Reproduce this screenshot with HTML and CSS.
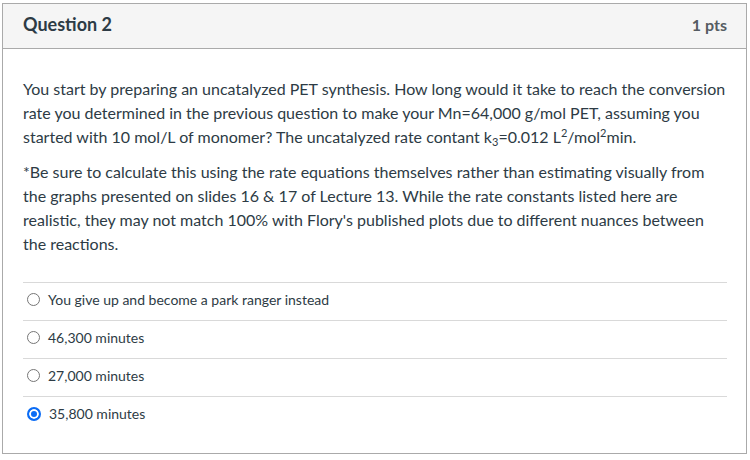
FILE: index.html
```html
<!DOCTYPE html>
<html>
<head>
<meta charset="utf-8">
<link rel="stylesheet" href="styles.css">
</head>
<body>
<div class="question">
  <div class="header">
    <h2 class="title">Question 2</h2>
    <span class="pts">1 pts</span>
  </div>
  <div class="content">
    <p>You start by preparing an uncatalyzed PET synthesis. How long would it take to reach the conversion rate you determined in the previous question to make your Mn=64,000 g/mol PET, assuming you started with 10 mol/L of monomer? The uncatalyzed rate contant k<sub>3</sub>=0.012 L<sup>2</sup>/mol<sup>2</sup>min.</p>
    <p>*Be sure to calculate this using the rate equations themselves rather than estimating visually from the graphs presented on slides 16 &amp; 17 of Lecture 13. While the rate constants listed here are realistic, they may not match 100% with Flory's published plots due to different nuances between the reactions.</p>
    <div class="answers">
      <label class="answer"><span class="radio"></span>You give up and become a park ranger instead</label>
      <label class="answer"><span class="radio"></span>46,300 minutes</label>
      <label class="answer"><span class="radio"></span>27,000 minutes</label>
      <label class="answer"><span class="radio checked"></span>35,800 minutes</label>
    </div>
  </div>
</div>
</body>
</html>
```
FILE: styles.css
```css
html, body {
  margin: 0;
  padding: 0;
  background: #fff;
}
body {
  padding: 3px 3px 0 2px;
  font-family: Lato, "Liberation Sans", sans-serif;
  color: #2d3b45;
}
.question {
  width: 745px;
  height: 451px;
  border: 1px solid #aaaaaa;
  box-sizing: border-box;
  display: flex;
  flex-direction: column;
}
.header {
  flex: none;
  height: 45px;
  background: #f5f5f5;
  border-bottom: 1px solid #aaaaaa;
  box-sizing: border-box;
  display: flex;
  align-items: center;
  justify-content: space-between;
  padding: 0 19px 4px 20px;
}
.title {
  margin: 0;
  font-size: 18px;
  font-weight: 700;
  color: #2d3b45;
}
.pts {
  font-size: 16px;
  font-weight: 700;
  color: #555c62;
}
.content {
  padding: 28px 19px 0 20px;
}
.content p {
  margin: 0 0 11px 0;
  font-size: 16px;
  line-height: 24px;
}
sub, sup {
  font-size: 11px;
  line-height: 0;
  position: relative;
  vertical-align: baseline;
}
sub { top: 3px; }
sup { top: -6px; }
.answers {
  margin-top: 26px;
  display: flex;
  flex-direction: column;
}
.answer {
  display: flex;
  align-items: center;
  height: 38px;
  border-top: 1px solid #d9d9d9;
  box-sizing: border-box;
  font-size: 14px;
  padding-left: 4px;
  padding-bottom: 4px;
}
.radio {
  width: 13px;
  height: 13px;
  border: 1px solid #767676;
  border-radius: 50%;
  box-sizing: border-box;
  margin-right: 8px;
  flex: none;
  background: #fff;
}
.radio.checked {
  width: 14px;
  height: 14px;
  border: 2px solid #0a6cf5;
  box-shadow: inset 0 0 0 2px #fff;
  background: #0a6cf5;
}
```
